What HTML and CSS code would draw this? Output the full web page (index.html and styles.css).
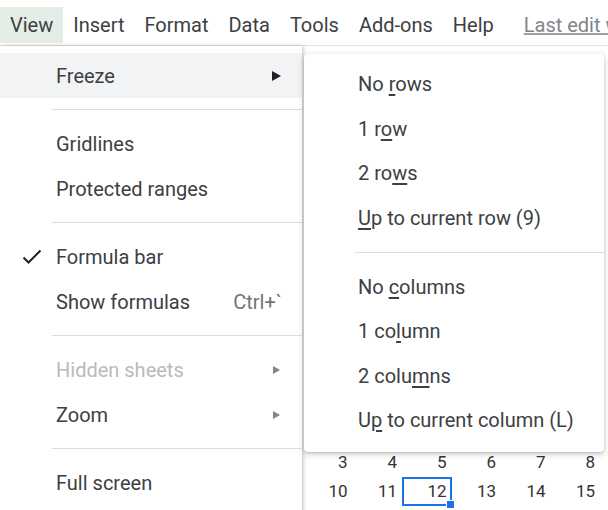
FILE: index.html
```html
<!DOCTYPE html>
<html>
<head>
<meta charset="utf-8">
<link rel="stylesheet" href="styles.css">
</head>
<body>
<div class="menubar">
  <span class="mb-item active">View</span>
  <span class="mb-item">Insert</span>
  <span class="mb-item">Format</span>
  <span class="mb-item">Data</span>
  <span class="mb-item">Tools</span>
  <span class="mb-item">Add-ons</span>
  <span class="mb-item">Help</span>
  <span class="mb-last">Last edit was seconds ago</span>
</div>
<div class="stage">
  <div class="sheet">
    <div class="row">
      <div class="cell">3</div><div class="cell">4</div><div class="cell">5</div><div class="cell">6</div><div class="cell">7</div><div class="cell">8</div>
    </div>
    <div class="row">
      <div class="cell">10</div><div class="cell">11</div><div class="cell sel">12<span class="handle"></span></div><div class="cell">13</div><div class="cell">14</div><div class="cell">15</div>
    </div>
  </div>

  <div class="menu main-menu">
    <div class="item hl"><span class="icon"></span><span class="label">Freeze</span><span class="arrow"></span></div>
    <div class="sep"></div>
    <div class="item"><span class="icon"></span><span class="label">Gridlines</span></div>
    <div class="item"><span class="icon"></span><span class="label">Protected ranges</span></div>
    <div class="sep"></div>
    <div class="item"><span class="icon"><svg width="20" height="16" viewBox="0 0 20 16"><path d="M1.5 8.5 L6.5 13.5 L18.5 1.5" fill="none" stroke="#202124" stroke-width="2"/></svg></span><span class="label">Formula bar</span></div>
    <div class="item"><span class="icon"></span><span class="label">Show formulas</span><span class="shortcut">Ctrl+`</span></div>
    <div class="sep"></div>
    <div class="item disabled"><span class="icon"></span><span class="label">Hidden sheets</span><span class="arrow small"></span></div>
    <div class="item"><span class="icon"></span><span class="label">Zoom</span><span class="arrow small"></span></div>
    <div class="sep"></div>
    <div class="item"><span class="icon"></span><span class="label">Full screen</span></div>
  </div>

  <div class="menu sub-menu">
    <div class="item"><span class="label">No <u>r</u>ows</span></div>
    <div class="item"><span class="label">1 r<u>o</u>w</span></div>
    <div class="item"><span class="label">2 ro<u>w</u>s</span></div>
    <div class="item"><span class="label"><u>U</u>p to current row (9)</span></div>
    <div class="sep"></div>
    <div class="item"><span class="label">No <u>c</u>olumns</span></div>
    <div class="item"><span class="label">1 co<u>l</u>umn</span></div>
    <div class="item"><span class="label">2 colu<u>m</u>ns</span></div>
    <div class="item"><span class="label">U<u>p</u> to current column (L)</span></div>
  </div>
</div>
</body>
</html>
```
FILE: styles.css
```css
html, body {
  margin: 0;
  padding: 0;
  background: #ffffff;
}
body {
  width: 608px;
  height: 510px;
  overflow: hidden;
  font-family: Roboto, "Liberation Sans", Arial, sans-serif;
  color: #3c4043;
}
.menubar {
  border-bottom: 1px solid #e3e3e3;
  display: flex;
  align-items: flex-start;
  padding-top: 7px;
  box-sizing: border-box;
  height: 46px;
  white-space: nowrap;
  overflow: hidden;
}
.mb-item {
  height: 36px;
  line-height: 36px;
  font-size: 20px;
  padding: 0 10px;
  color: #3c4043;
}
.mb-item.active {
  background: #e4eee6;
}
.mb-last {
  height: 36px;
  line-height: 36px;
  font-size: 20px;
  margin-left: 20px;
  color: #80868b;
  text-decoration: underline;
  text-decoration-color: #9aa0a6;
}
.stage {
  position: relative;
  height: 464px;
  display: flex;
  flex-direction: column;
  justify-content: flex-end;
  padding-bottom: 4px;
  box-sizing: border-box;
}
.sheet {
  margin-left: 303px;
}
.row {
  display: grid;
  grid-template-columns: repeat(6, 49.5px);
  height: 29px;
}
.cell {
  position: relative;
  text-align: right;
  padding-right: 5px;
  font-size: 17px;
  line-height: 29px;
  color: #333;
}
.cell.sel {
  box-shadow: inset 0 0 0 2px #1a73e8;
}
.handle {
  position: absolute;
  right: -3px;
  bottom: -3px;
  width: 7px;
  height: 7px;
  background: #1a73e8;
  border: 1px solid #fff;
}
.menu {
  position: absolute;
  background: #fff;
  box-sizing: border-box;
}
.main-menu {
  left: 0;
  top: 0;
  width: 302px;
  height: 500px;
  padding-top: 7px;
  box-shadow: 1px 0 3px rgba(0,0,0,0.18), 2px 0 6px rgba(0,0,0,0.08);
}
.sub-menu {
  left: 304px;
  top: 8px;
  width: 300px;
  padding: 8px 0 9px;
  border-radius: 4px;
  box-shadow: 0 2px 6px rgba(0,0,0,0.22), 0 1px 2px rgba(0,0,0,0.12);
}
.item {
  height: 45px;
  display: flex;
  align-items: center;
  font-size: 20px;
  color: #3c4043;
  padding-right: 20px;
  white-space: nowrap;
}
.sub-menu .item {
  height: 44.5px;
  padding-left: 54px;
}
.item.hl {
  background: #f1f3f4;
}
.item.disabled {
  color: #b8babc;
}
.icon {
  width: 34px;
  padding-left: 22px;
  flex: none;
  display: flex;
  align-items: center;
}
.label {
  flex: 1;
}
.label u {
  text-underline-offset: 3px;
}
.shortcut {
  color: #70757a;
  font-size: 20px;
}
.arrow {
  width: 0;
  height: 0;
  border-left: 9px solid #202124;
  border-top: 5px solid transparent;
  border-bottom: 5px solid transparent;
  margin-right: 1px;
}
.arrow.small {
  border-left: 7px solid #80868b;
  border-top: 4px solid transparent;
  border-bottom: 4px solid transparent;
  margin-right: 2px;
}
.sep {
  height: 23px;
  display: flex;
  align-items: center;
  padding-left: 52px;
}
.sep::before {
  content: "";
  display: block;
  flex: 1;
  height: 1px;
  background: #dadce0;
}
.sub-menu .sep {
  height: 24.5px;
  padding-left: 51px;
}
```
